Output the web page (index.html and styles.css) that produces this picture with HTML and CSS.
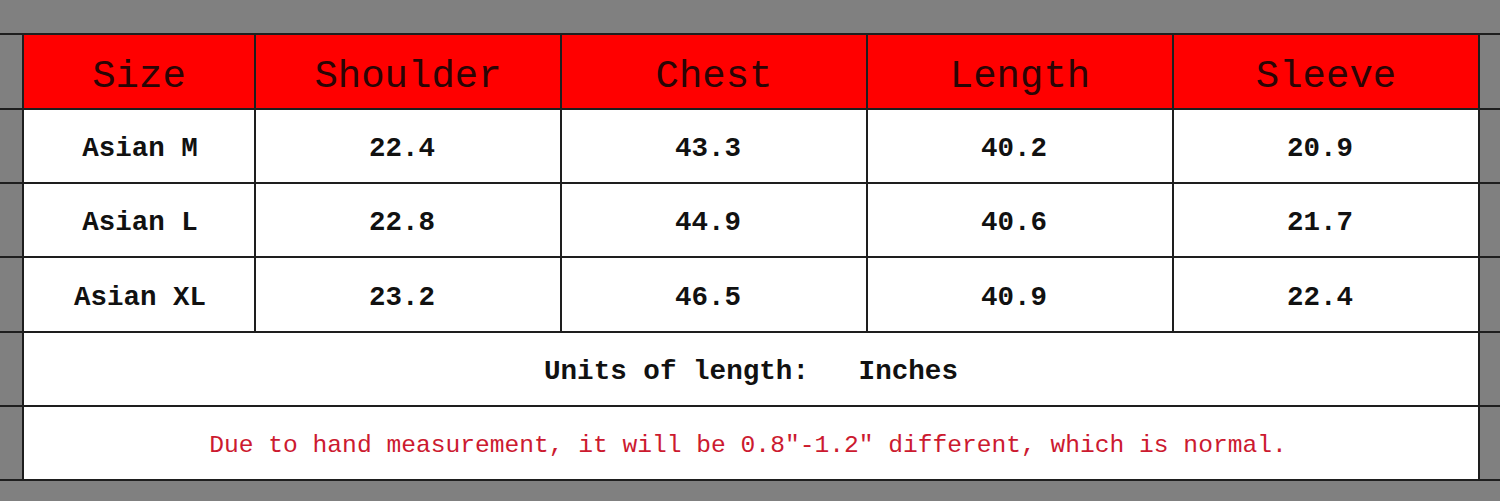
FILE: index.html
```html
<!DOCTYPE html>
<html>
<head>
<meta charset="utf-8">
<title>Size chart</title>
<link rel="stylesheet" href="styles.css">
</head>
<body>
<div class="band-top"></div>
<div class="sheet">
  <div class="side"></div>
  <div class="cell head">Size</div>
  <div class="cell head">Shoulder</div>
  <div class="cell head">Chest</div>
  <div class="cell head">Length</div>
  <div class="cell head">Sleeve</div>
  <div class="side"></div>

  <div class="side"></div>
  <div class="cell label">Asian M</div>
  <div class="cell num">22.4</div>
  <div class="cell num">43.3</div>
  <div class="cell num">40.2</div>
  <div class="cell num">20.9</div>
  <div class="side"></div>

  <div class="side"></div>
  <div class="cell label">Asian L</div>
  <div class="cell num">22.8</div>
  <div class="cell num">44.9</div>
  <div class="cell num">40.6</div>
  <div class="cell num">21.7</div>
  <div class="side"></div>

  <div class="side"></div>
  <div class="cell label">Asian XL</div>
  <div class="cell num">23.2</div>
  <div class="cell num">46.5</div>
  <div class="cell num">40.9</div>
  <div class="cell num">22.4</div>
  <div class="side"></div>

  <div class="side"></div>
  <div class="cell wide units">Units of length:   Inches</div>
  <div class="side"></div>

  <div class="side"></div>
  <div class="cell wide note">Due to hand measurement, it will be 0.8″-1.2″ different, which is normal.</div>
  <div class="side"></div>
</div>
</body>
</html>
```

FILE: styles.css
```css
html, body {
  margin: 0;
  padding: 0;
  background: #808080;
  width: 1500px;
  height: 501px;
  overflow: hidden;
}

.band-top {
  height: 33px;
  background: #808080;
}

.sheet {
  display: grid;
  grid-template-columns: 22px 230px 304px 304px 304px 304px 20px;
  grid-template-rows: 73px 72px 72px 73px 72px 72px;
  gap: 2px;
  padding: 2px 0;
  background: #1e1e1e;
  font-family: "Liberation Mono", "DejaVu Sans Mono", monospace;
}

.side {
  background: #808080;
}

.cell {
  background: #ffffff;
  color: #111111;
  display: flex;
  align-items: center;
  justify-content: center;
  font-size: 27.5px;
  font-weight: bold;
  padding-top: 5px;
  box-sizing: border-box;
  white-space: pre;
}

.label {
  padding-left: 2px;
}

.num {
  padding-right: 12px;
}

.head {
  background: #ff0000;
  color: #2a0505;
  font-size: 39px;
  font-weight: normal;
  padding-top: 11px;
}

.wide {
  grid-column: span 5;
}

.units {
  font-size: 27.6px;
}

.note {
  color: #cc1a30;
  font-size: 24.6px;
  font-weight: normal;
  padding-right: 6px;
}
```
